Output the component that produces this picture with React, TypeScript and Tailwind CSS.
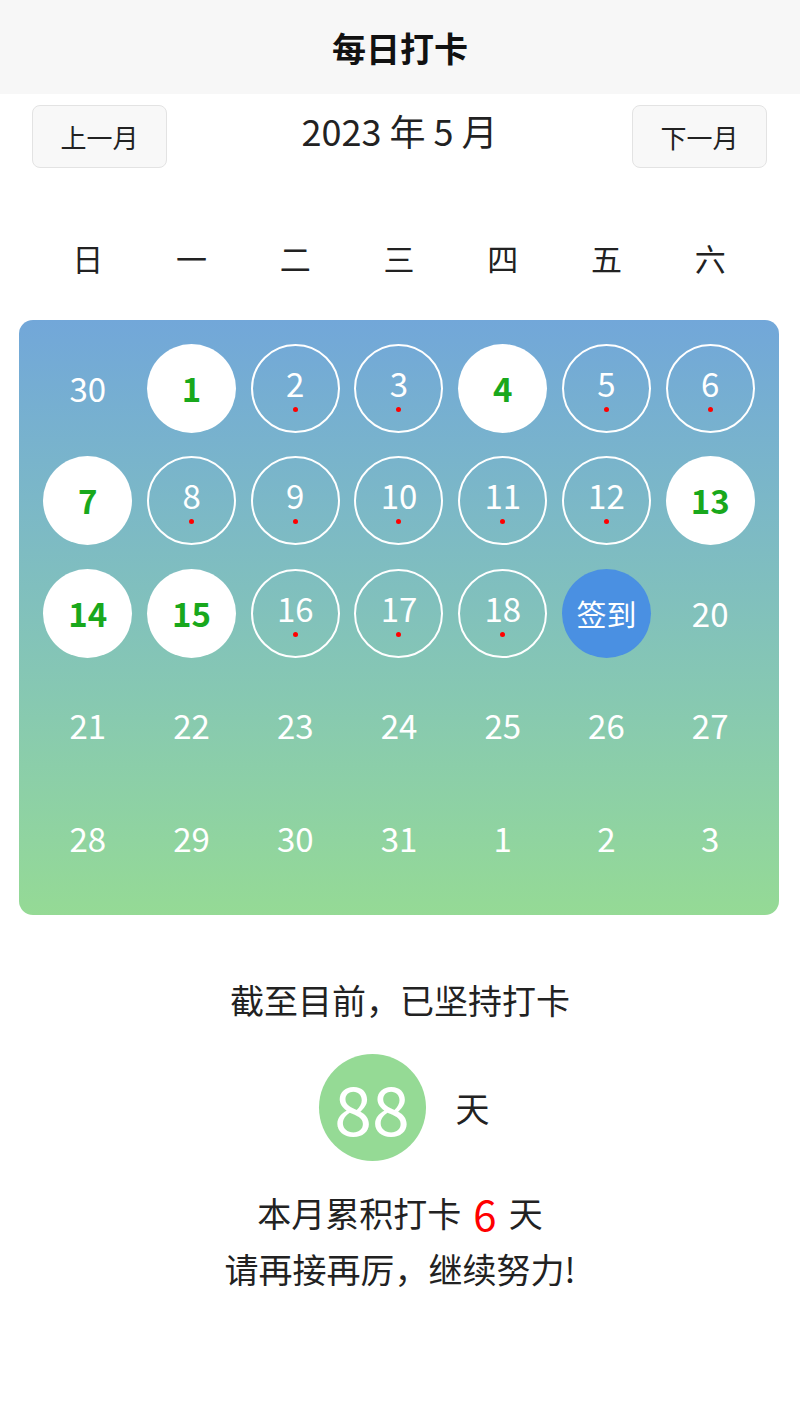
import React from "react";

type Cell = { n: number; kind: "plain" | "done" | "miss" | "today" };

const doneSet = new Set([1, 4, 7, 13, 14, 15]);
const missSet = new Set([2, 3, 5, 6, 8, 9, 10, 11, 12, 16, 17, 18]);

const cells: Cell[] = [
  { n: 30, kind: "plain" },
  ...Array.from({ length: 31 }, (_, i) => {
    const n = i + 1;
    let kind: Cell["kind"] = "plain";
    if (doneSet.has(n)) kind = "done";
    else if (missSet.has(n)) kind = "miss";
    else if (n === 19) kind = "today";
    return { n, kind };
  }),
  { n: 1, kind: "plain" },
  { n: 2, kind: "plain" },
  { n: 3, kind: "plain" },
];

const weekdays = ["日", "一", "二", "三", "四", "五", "六"];

function DayCell({ c }: { c: Cell }) {
  return (
    <div className="h-[112.5px] flex items-center justify-center">
      {c.kind === "plain" && (
        <span className="text-[33px] text-white leading-none">{c.n}</span>
      )}
      {c.kind === "done" && (
        <div className="w-[89px] h-[89px] rounded-full bg-white flex items-center justify-center">
          <span className="text-[33px] font-bold text-[#19a81c] leading-none">{c.n}</span>
        </div>
      )}
      {c.kind === "miss" && (
        <div className="w-[89px] h-[89px] rounded-full border-2 border-white flex flex-col items-center justify-center">
          <span className="text-[33px] text-white leading-none mt-[2px]">{c.n}</span>
          <span className="w-[5px] h-[5px] rounded-full bg-[#ff0000] mt-[7px]" />
        </div>
      )}
      {c.kind === "today" && (
        <div className="w-[89px] h-[89px] rounded-full bg-[#4a90e2] flex items-center justify-center">
          <span className="text-[30px] text-white leading-none">签到</span>
        </div>
      )}
    </div>
  );
}

export default function App() {
  return (
    <div
      className="w-[800px] min-h-[1422px] bg-white text-[#333333]"
      style={{ fontFamily: '"Noto Sans CJK SC", "Noto Sans", sans-serif' }}
    >
      <div className="h-[94px] bg-[#f7f7f7] flex items-center justify-center">
        <span className="text-[34px] font-bold text-[#111111]">每日打卡</span>
      </div>

      <div className="flex justify-between items-start pl-[32px] pr-[33px] pt-[11px]">
        <button className="w-[135px] h-[63px] rounded-[8px] bg-[#f8f8f8] border border-[#e3e3e3] text-[26px] text-[#222222] flex items-center justify-center">
          上一月
        </button>
        <div className="text-[36px] leading-none text-[#222222] mt-[7px]">2023 年 5 月</div>
        <button className="w-[135px] h-[63px] rounded-[8px] bg-[#f8f8f8] border border-[#e3e3e3] text-[26px] text-[#222222] flex items-center justify-center">
          下一月
        </button>
      </div>

      <div className="grid grid-cols-7 pl-[36px] pr-[38px] mt-[67px]">
        {weekdays.map((w) => (
          <div key={w} className="text-center text-[31px] leading-[46px] text-[#222222]">
            {w}
          </div>
        ))}
      </div>

      <div className="ml-[19px] mr-[21px] mt-[39px] rounded-[14px] bg-gradient-to-b from-[#72a7d9] to-[#95da95] px-[17px] pt-[12px] pb-[20px]">
        <div className="grid grid-cols-7">
          {cells.map((c, i) => (
            <DayCell key={i} c={c} />
          ))}
        </div>
      </div>

      <div className="flex flex-col items-center mt-[62px]">
        <div className="text-[34px] leading-[46px] text-[#222222]">截至目前，已坚持打卡</div>
        <div className="flex items-center mt-[31px] ml-[8px]">
          <div className="w-[107px] h-[107px] rounded-full bg-[#95da95] flex items-center justify-center">
            <span className="text-[68px] text-white leading-none">88</span>
          </div>
          <span className="text-[34px] ml-[30px] text-[#222222]">天</span>
        </div>
        <div className="mt-[26px] text-[34px] leading-[52px] text-[#222222] flex items-center">
          <span>本月累积打卡</span>
          <span className="text-[42px] text-[#ff0000] mx-[12px]">6</span>
          <span>天</span>
        </div>
        <div className="text-[34px] leading-[52px] mt-[4px] text-[#222222]">请再接再厉，继续努力!</div>
      </div>
    </div>
  );
}
